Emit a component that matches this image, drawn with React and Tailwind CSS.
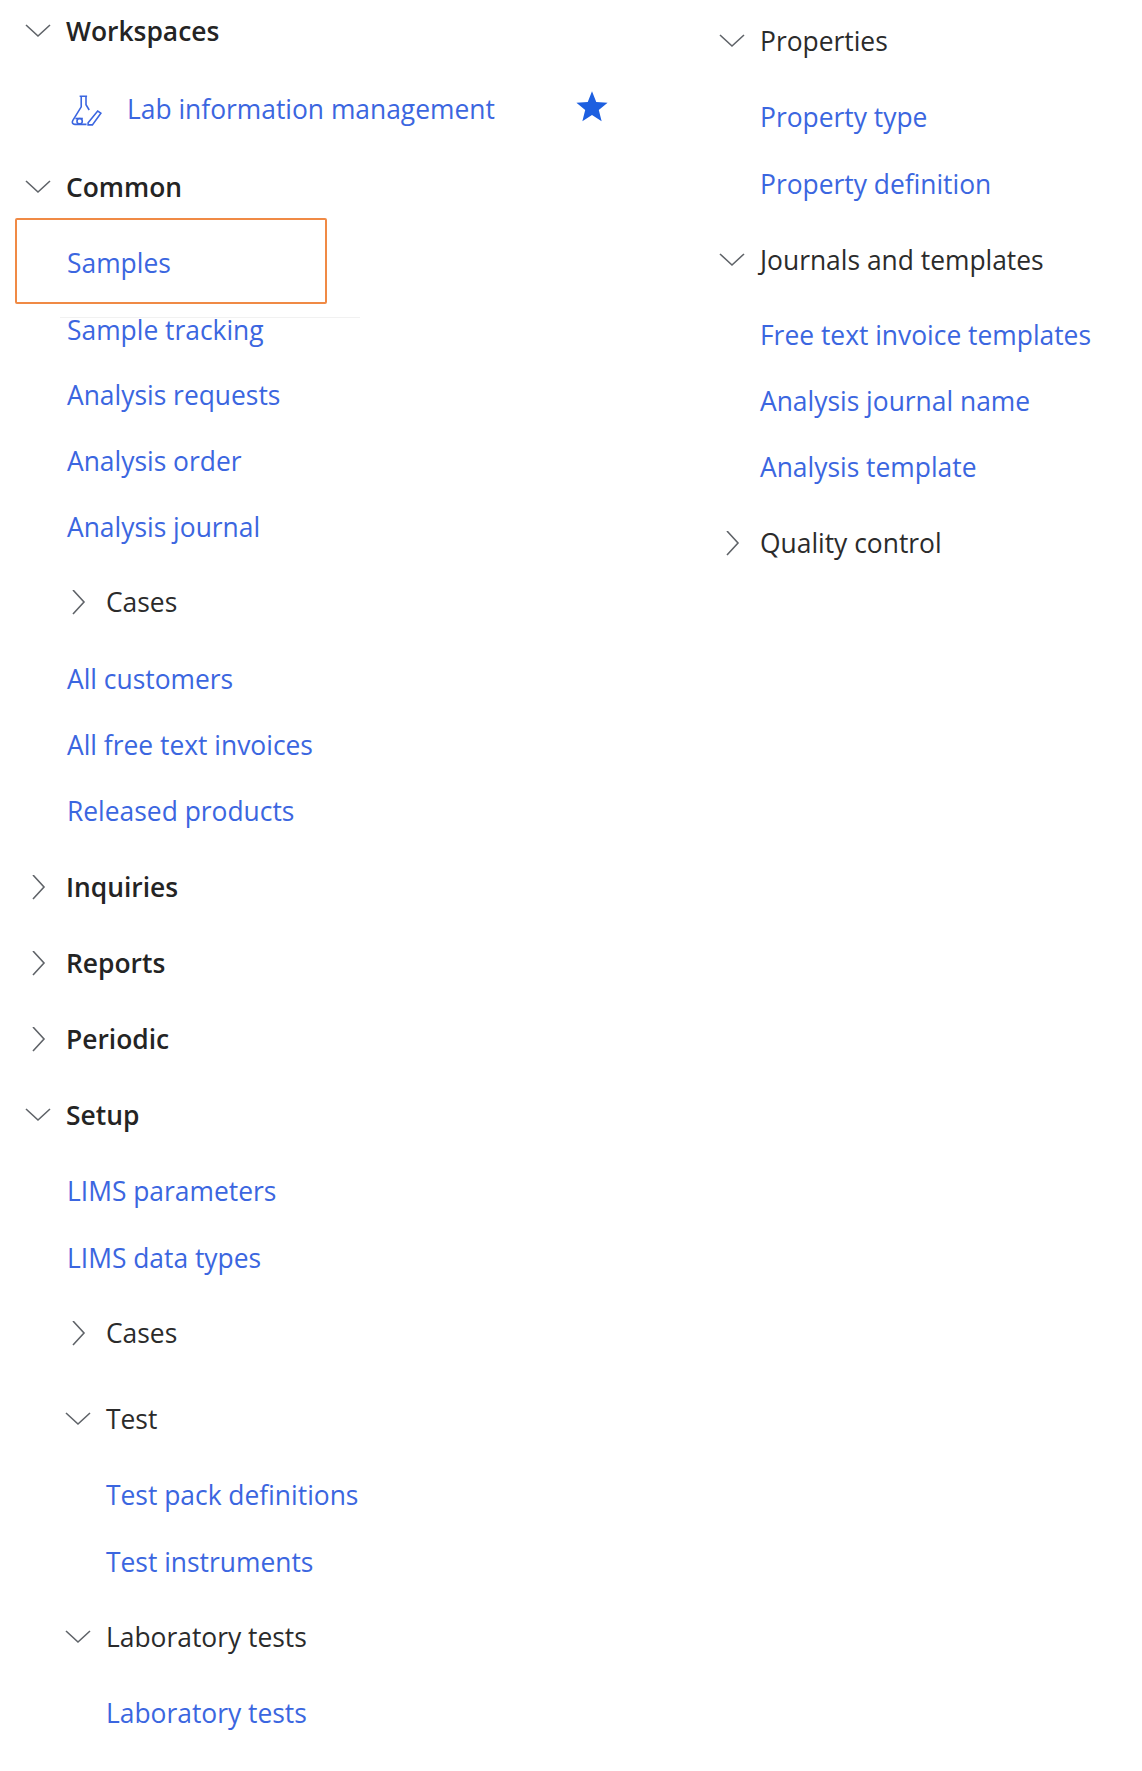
import React from 'react';

const leftRows = [
  { type: 'head', label: 'Workspaces', open: true, gap: 'mt-0' },
  { type: 'workspace', label: 'Lab information management', gap: 'mt-[42px]' },
  { type: 'head', label: 'Common', open: true, gap: 'mt-[42px]' },
  { type: 'link', label: 'Samples', indent: 'pl-[67px]', gap: 'mt-[40px]', focused: true },
  { type: 'link', label: 'Sample tracking', indent: 'pl-[67px]', gap: 'mt-[31px]', ruled: true },
  { type: 'link', label: 'Analysis requests', indent: 'pl-[67px]', gap: 'mt-[29px]' },
  { type: 'link', label: 'Analysis order', indent: 'pl-[67px]', gap: 'mt-[30px]' },
  { type: 'link', label: 'Analysis journal', indent: 'pl-[67px]', gap: 'mt-[30px]' },
  { type: 'sub', label: 'Cases', open: false, gap: 'mt-[39px]' },
  { type: 'link', label: 'All customers', indent: 'pl-[67px]', gap: 'mt-[41px]' },
  { type: 'link', label: 'All free text invoices', indent: 'pl-[67px]', gap: 'mt-[30px]' },
  { type: 'link', label: 'Released products', indent: 'pl-[67px]', gap: 'mt-[30px]' },
  { type: 'head', label: 'Inquiries', open: false, gap: 'mt-[40px]' },
  { type: 'head', label: 'Reports', open: false, gap: 'mt-[40px]' },
  { type: 'head', label: 'Periodic', open: false, gap: 'mt-[40px]' },
  { type: 'head', label: 'Setup', open: true, gap: 'mt-[40px]' },
  { type: 'link', label: 'LIMS parameters', indent: 'pl-[67px]', gap: 'mt-[40px]' },
  { type: 'link', label: 'LIMS data types', indent: 'pl-[67px]', gap: 'mt-[31px]' },
  { type: 'sub', label: 'Cases', open: false, gap: 'mt-[39px]' },
  { type: 'sub', label: 'Test', open: true, gap: 'mt-[50px]' },
  { type: 'link', label: 'Test pack definitions', indent: 'pl-[106px]', gap: 'mt-[40px]' },
  { type: 'link', label: 'Test instruments', indent: 'pl-[106px]', gap: 'mt-[31px]' },
  { type: 'sub', label: 'Laboratory tests', open: true, gap: 'mt-[39px]' },
  { type: 'link', label: 'Laboratory tests', indent: 'pl-[106px]', gap: 'mt-[40px]' },
];

const rightRows = [
  { type: 'group', label: 'Properties', open: true, gap: 'mt-0' },
  { type: 'link', label: 'Property type', indent: 'pl-[80px]', gap: 'mt-[40px]' },
  { type: 'link', label: 'Property definition', indent: 'pl-[80px]', gap: 'mt-[31px]' },
  { type: 'group', label: 'Journals and templates', open: true, gap: 'mt-[40px]' },
  { type: 'link', label: 'Free text invoice templates', indent: 'pl-[80px]', gap: 'mt-[39px]' },
  { type: 'link', label: 'Analysis journal name', indent: 'pl-[80px]', gap: 'mt-[30px]' },
  { type: 'link', label: 'Analysis template', indent: 'pl-[80px]', gap: 'mt-[30px]' },
  { type: 'group', label: 'Quality control', open: false, gap: 'mt-[40px]' },
];

const Chevron = ({ open }) => (
  <svg width="26" height="26" viewBox="0 0 26 26" fill="none" stroke="#5f6368" strokeWidth="1.6" className="shrink-0">
    {open ? <polyline points="1,6 13,17 25,6" /> : <polyline points="8,0 19,12 8,24" />}
  </svg>
);

const FlaskIcon = () => (
  <svg width="34" height="34" viewBox="0 0 32 32" fill="none" stroke="#3b66e0" strokeWidth="1.5" className="shrink-0">
    <path d="M10 3h7M11.5 3v10L3.5 26c-1 2 0 3.5 2 3.5h11" />
    <path d="M16 3v8l3 5" />
    <path d="M6 24h7" />
    <circle cx="10" cy="26.5" r="2.5" />
    <path d="M18 28l9-11 3 2-8 11h-4z" />
  </svg>
);

const Row = ({ row }) => {
  const base = `relative flex h-9 items-center ${row.gap}`;

  if (row.type === 'head') {
    return (
      <div className={`${base} gap-[15px] pl-[25px]`}>
        <Chevron open={row.open} />
        <span className="font-semibold text-[#242424]">{row.label}</span>
      </div>
    );
  }
  if (row.type === 'sub') {
    return (
      <div className={`${base} gap-[15px] pl-[65px]`}>
        <Chevron open={row.open} />
        <span className="text-[#2b2b2b]">{row.label}</span>
      </div>
    );
  }
  if (row.type === 'group') {
    return (
      <div className={`${base} gap-[15px] pl-[39px]`}>
        <Chevron open={row.open} />
        <span className="text-[#2b2b2b]">{row.label}</span>
      </div>
    );
  }
  if (row.type === 'workspace') {
    return (
      <div className={`${base} pl-[69px]`}>
        <FlaskIcon />
        <span className="ml-[24px] w-[449px] text-[#3b66e0]">{row.label}</span>
        <svg width="34" height="34" viewBox="0 0 24 24" fill="#1d5fe0" className="mt-[-8px] ml-[-1px] shrink-0">
          <path d="M12 1.5l3 7.6 8 .6-6.2 5.1 2 7.9L12 18.4l-6.8 4.3 2-7.9L1 9.7l8-.6z" />
        </svg>
      </div>
    );
  }
  return (
    <div className={`${base} ${row.indent} text-[#3b66e0]`}>
      {row.focused && (
        <div className="absolute left-[15px] top-[-28px] h-[86px] w-[312px] rounded-[2px] border-2 border-[#f08a45]" />
      )}
      {row.ruled && <div className="absolute left-[60px] top-[4px] h-px w-[300px] bg-[#f1f1f1]" />}
      {row.label}
    </div>
  );
};

export default function App() {
  return (
    <div className="flex min-h-[1771px] w-[1142px] bg-white text-[26.4px] [font-family:'Open_Sans',sans-serif]">
      <div className="w-[680px] shrink-0 pt-[14px]">
        {leftRows.map((row, i) => <Row key={i} row={row} />)}
      </div>
      <div className="flex-1 pt-[24px]">
        {rightRows.map((row, i) => <Row key={i} row={row} />)}
      </div>
    </div>
  );
}
